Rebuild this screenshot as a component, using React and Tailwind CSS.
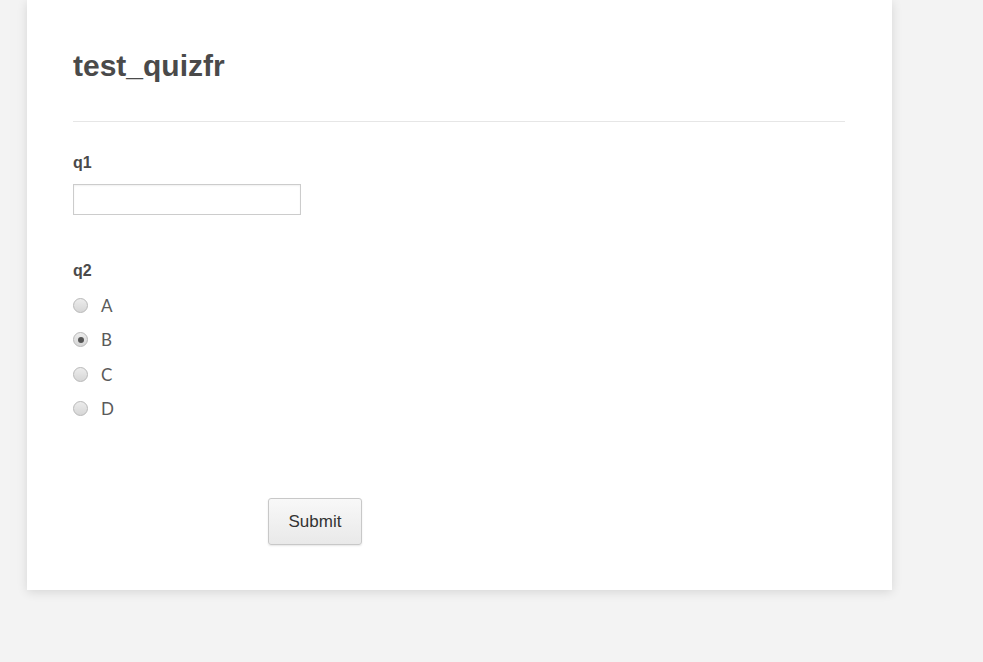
export default function App() {
  const opts = [
    { l: "A", c: false },
    { l: "B", c: true },
    { l: "C", c: false },
    { l: "D", c: false },
  ];
  return (
    <div className="min-h-[662px] w-full bg-[#f3f3f3]" style={{ fontFamily: '"Liberation Sans", Arial, sans-serif' }}>
      <div className="ml-[27px] w-[865px] bg-white pl-[46px] pr-[47px] pt-[51px] pb-[45px] shadow-[0_2px_10px_rgba(0,0,0,0.12)]">
        <h1 className="text-[30px] font-bold leading-[30px] text-[#4a4a4a]">test_quizfr</h1>
        <div className="mt-[40px] h-px bg-[#e6e6e6]" />
        <div className="mt-[33px] text-[16px] font-bold leading-[16px] text-[#4a4a4a]">q1</div>
        <div className="mt-[13px] h-[31px] w-[228px] border border-[#cccccc] bg-white shadow-[inset_0_1px_2px_rgba(0,0,0,0.06)]" />
        <div className="mt-[48px] text-[16px] font-bold leading-[16px] text-[#4a4a4a]">q2</div>
        <div className="mt-[9px] flex flex-col">
          {opts.map((o) => (
            <div key={o.l} className="flex h-[34.5px] items-center gap-[13px]">
              <div className="flex h-[15px] w-[15px] items-center justify-center rounded-full border border-[#b8b8b8] bg-[linear-gradient(#ececec,#d6d6d6)]">
                {o.c && <div className="h-[6px] w-[6px] rounded-full bg-[#555]" />}
              </div>
              <span className="text-[17px] leading-none text-[#5a5a5a]" style={{ fontFamily: 'Lato, "Open Sans", sans-serif' }}>{o.l}</span>
            </div>
          ))}
        </div>
        <div className="mt-[72px] pl-[195px]">
          <button className="h-[47px] w-[94px] rounded-[3px] border border-[#c8c8c8] bg-[linear-gradient(#f8f8f8,#e9e9e9)] text-[17px] text-[#333] shadow-[0_1px_2px_rgba(0,0,0,0.1)]">
            Submit
          </button>
        </div>
      </div>
    </div>
  );
}
